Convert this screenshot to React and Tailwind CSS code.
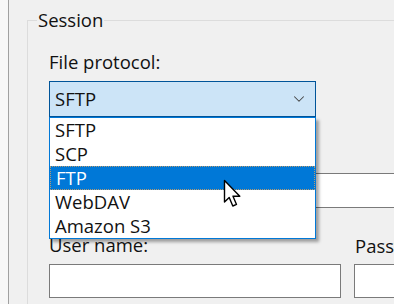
import { ChevronDown } from 'lucide-react'

const ITEMS = ['SFTP', 'SCP', 'FTP', 'WebDAV', 'Amazon S3']

function Cursor() {
  return (
    <svg width="22" height="32" viewBox="0 0 22 32" className="absolute left-[223px] top-[179px]">
      <path
        d="M1.5 1.5 L1.5 23 L6.2 18.5 L9.8 27 L13.5 25.4 L10 17.2 L16.8 17.2 Z"
        fill="#fff"
        stroke="#000"
        strokeWidth="1.4"
        strokeLinejoin="round"
      />
    </svg>
  )
}

export default function App() {
  return (
    <div
      className="relative flex h-[304px] w-[394px] overflow-hidden bg-[#f0f0f0] text-[18.5px] text-[#111]"
      style={{ fontFamily: '"Open Sans", "Noto Sans", sans-serif' }}
    >
      {/* left pane edge */}
      <div className="w-[9px] shrink-0 border-r border-[#a0a0a0] bg-[#f7f7f7]" />

      <div className="flex-1 pl-[18px] pt-[20px]">
        {/* Session group box */}
        <div className="relative h-[300px] w-[400px] border-l border-t border-[#dcdcdc] pl-[21px] pt-[30px]">
          <span className="absolute -top-[13px] left-[9px] bg-[#f0f0f0] px-[1px] leading-[24px]">Session</span>

          <div className="leading-[22px]">File protocol:</div>

          {/* combo box (pressed) */}
          <div className="mt-[8px] flex h-[36px] w-[267px] items-center justify-between border border-[#005499] bg-[#cce4f7] pl-[5px] pr-[7px]">
            <span>SFTP</span>
            <ChevronDown className="h-[18px] w-[18px] text-[#444]" strokeWidth={1.4} />
          </div>

          {/* host name row (label hidden under dropdown) */}
          <div className="mt-[56px] h-[35px] w-[400px] border border-[#7a7a7a] bg-white" />

          <div className="mt-[27px] flex leading-[22px]">
            <span className="-mt-[1px] w-[306px] shrink-0">User name:</span>
            <span className="shrink-0">Password:</span>
          </div>

          <div className="mt-[7px] flex gap-[13px]">
            <div className="h-[34px] w-[292px] shrink-0 border border-[#7a7a7a] bg-white" />
            <div className="h-[34px] w-[100px] shrink-0 border border-[#7a7a7a] bg-white" />
          </div>

          {/* dropdown list */}
          <div className="absolute left-[21px] top-[96px] w-[267px] border border-[#0078d7] bg-white shadow-[3px_3px_3px_rgba(0,0,0,0.35)]">
            {ITEMS.map(item => (
              <div
                key={item}
                className={`flex h-[24px] items-center pl-[5px] ${
                  item === 'FTP'
                    ? 'border border-dotted border-[#b49a72] bg-[#0078d7] pl-[4px] text-white'
                    : ''
                }`}
              >
                {item}
              </div>
            ))}
          </div>
        </div>
      </div>

      <Cursor />
    </div>
  )
}
